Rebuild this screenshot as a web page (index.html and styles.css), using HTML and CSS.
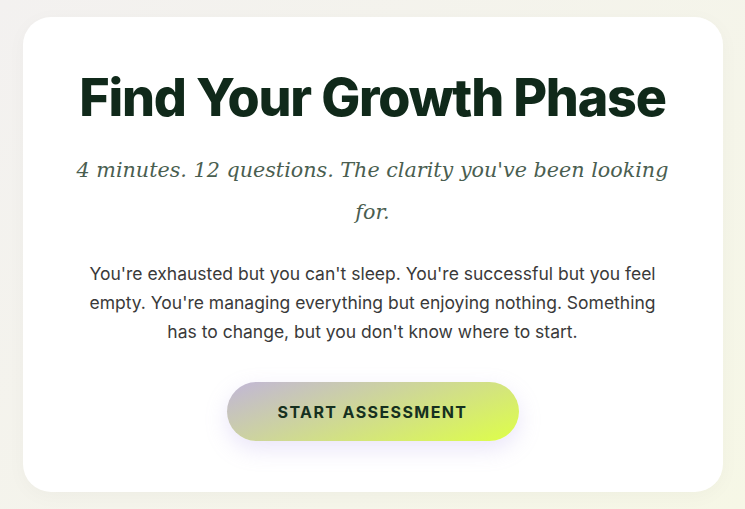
FILE: index.html
```html
<!DOCTYPE html>
<html lang="en">
<head>
    <meta charset="UTF-8">
    <meta name="viewport" content="width=device-width, initial-scale=1.0">
    <title>Find Your Growth Phase</title>
    <link rel="stylesheet" href="styles.css">
</head>
<body>

    <div class="quiz-card">
        <h1 class="quiz-title">Find Your Growth Phase</h1>
        <p class="quiz-subtitle">4 minutes. 12 questions. The clarity you've been looking for.</p>
        <p class="quiz-intro">You're exhausted but you can't sleep. You're successful but you feel empty. You're managing everything but enjoying nothing. Something has to change, but you don't know where to start.</p>
        <button class="start-btn" type="button">START ASSESSMENT</button>
    </div>

</body>
</html>
```

FILE: styles.css
```css
body {
    margin: 0;
    min-height: 100vh;
    display: flex;
    align-items: center;
    justify-content: center;
    background: linear-gradient(135deg, #f3f1f0, #f6f7e6);
    font-family: 'Inter', sans-serif;
}

.quiz-card {
    width: 700px;
    box-sizing: border-box;
    background: white;
    border-radius: 28px;
    padding: 52px 40px 51px;
    text-align: center;
    box-shadow: 0px 4px 20px rgba(0, 0, 0, 0.03);
}

.quiz-title {
    font-family: 'Inter', sans-serif;
    font-weight: 800;
    font-size: 52px;
    letter-spacing: -1.2px;
    line-height: 1.1;
    color: #10291a;
    margin: 0 0 23px;
}

.quiz-subtitle {
    font-family: 'DejaVu Serif', serif;
    font-style: italic;
    font-size: 20.7px;
    line-height: 42px;
    color: #4a5e50;
    margin: 0 0 26px;
}

.quiz-intro {
    font-size: 17.5px;
    line-height: 29px;
    color: #3a3a3a;
    max-width: 580px;
    margin: 0 auto 36px;
}

.start-btn {
    font-family: 'Inter', sans-serif;
    font-weight: 700;
    font-size: 16px;
    letter-spacing: 1.4px;
    color: #163020;
    width: 292px;
    height: 59px;
    border: none;
    border-radius: 30px;
    background: linear-gradient(160deg, #c1b6d8, #deff48);
    box-shadow: 0px 8px 22px rgba(170, 150, 230, 0.25);
    cursor: pointer;
}
```
